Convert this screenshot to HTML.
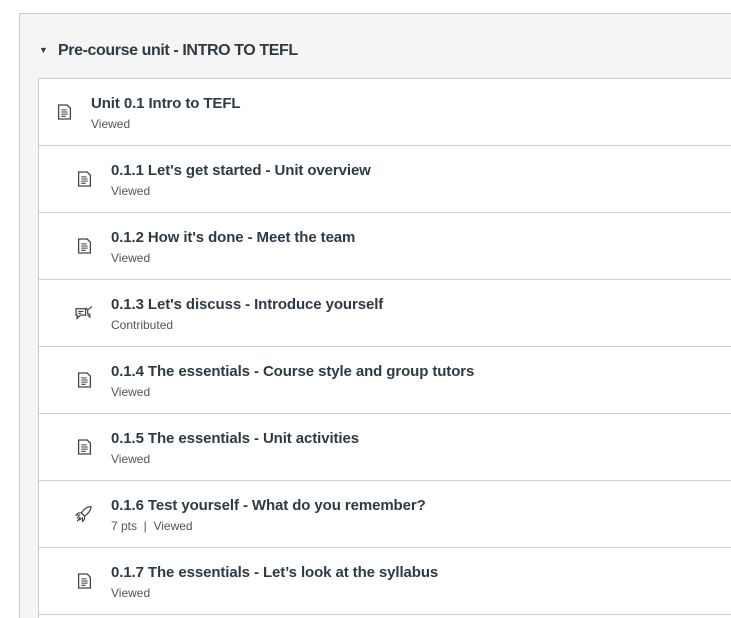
<!DOCTYPE html>
<html><head><style>
html,body{margin:0;background:#fff;font-family:"Liberation Sans",sans-serif;width:731px;height:618px;overflow:hidden;position:relative}
.outer{position:absolute;left:19px;top:13px;width:711px;height:604px;background:#f5f5f5;border-left:1px solid #c7cdd1;border-top:1px solid #c7cdd1}
.hdr{position:absolute;left:39px;top:42px;font-size:16px;font-weight:bold;color:#2d3b45;letter-spacing:-0.4px}
.hdr .tri{font-size:9px;display:inline-block;width:19px;vertical-align:2px}
.list{position:absolute;left:38px;top:78px;width:693px;height:540px;overflow:hidden;background:#fff;border-left:1px solid #c7cdd1;border-top:1px solid #c7cdd1}
.row{position:relative;height:66px;border-bottom:1px solid #c7cdd1}
.ic{position:absolute;top:24px;width:15px;height:18px}
.t{position:absolute;top:16px;font-size:15px;font-weight:bold;color:#2d3b45;letter-spacing:-0.1px;white-space:nowrap}
.s{position:absolute;top:38px;font-size:12px;color:#555}
</style></head><body>
<div class="outer"></div>
<div class="hdr"><span class="tri">▼</span>Pre-course unit - INTRO TO TEFL</div>
<div class="list">
<div class="row"><svg class="ic" style="left:18px" viewBox="0 0 14 16"><path d="M1.5 1.5h8l3 3v10h-11z" fill="none" stroke="#444" stroke-width="1.2"/><path d="M4 6h5M4 8h6M4 10h6M4 12h4" stroke="#444" stroke-width="1"/></svg><div class="t" style="left:52px">Unit 0.1 Intro to TEFL</div><div class="s" style="left:52px">Viewed</div></div>
<div class="row"><svg class="ic" style="left:38px" viewBox="0 0 14 16"><path d="M1.5 1.5h8l3 3v10h-11z" fill="none" stroke="#444" stroke-width="1.2"/><path d="M4 6h5M4 8h6M4 10h6M4 12h4" stroke="#444" stroke-width="1"/></svg><div class="t" style="left:72px">0.1.1 Let's get started - Unit overview</div><div class="s" style="left:72px">Viewed</div></div>
<div class="row"><svg class="ic" style="left:38px" viewBox="0 0 14 16"><path d="M1.5 1.5h8l3 3v10h-11z" fill="none" stroke="#444" stroke-width="1.2"/><path d="M4 6h5M4 8h6M4 10h6M4 12h4" stroke="#444" stroke-width="1"/></svg><div class="t" style="left:72px">0.1.2 How it's done - Meet the team</div><div class="s" style="left:72px">Viewed</div></div>
<div class="row"><svg class="ic" style="left:36px;width:18px" viewBox="0 0 17 16"><path d="M1 4h9v6H5l-3 3v-3H1z" fill="none" stroke="#444" stroke-width="1.2"/><path d="M10 3l2 2 4-3M12 5v4h2v3l-2-2" fill="none" stroke="#444" stroke-width="1.1"/><path d="M3 6.5h5M3 8.3h3" stroke="#444"/></svg><div class="t" style="left:72px">0.1.3 Let's discuss - Introduce yourself</div><div class="s" style="left:72px">Contributed</div></div>
<div class="row"><svg class="ic" style="left:38px" viewBox="0 0 14 16"><path d="M1.5 1.5h8l3 3v10h-11z" fill="none" stroke="#444" stroke-width="1.2"/><path d="M4 6h5M4 8h6M4 10h6M4 12h4" stroke="#444" stroke-width="1"/></svg><div class="t" style="left:72px">0.1.4 The essentials - Course style and group tutors</div><div class="s" style="left:72px">Viewed</div></div>
<div class="row"><svg class="ic" style="left:38px" viewBox="0 0 14 16"><path d="M1.5 1.5h8l3 3v10h-11z" fill="none" stroke="#444" stroke-width="1.2"/><path d="M4 6h5M4 8h6M4 10h6M4 12h4" stroke="#444" stroke-width="1"/></svg><div class="t" style="left:72px">0.1.5 The essentials - Unit activities</div><div class="s" style="left:72px">Viewed</div></div>
<div class="row"><svg class="ic" style="left:36px;width:18px" viewBox="0 0 17 16"><path d="M15 1c-4 0-7 3-9 6l3 3c3-2 6-5 6-9z" fill="none" stroke="#444" stroke-width="1.2"/><path d="M6 7H3L1 9h4M9 10v3l-2 2v-4M5 11l-3 4M4 10l-2 2M6 12l-2 2" fill="none" stroke="#444" stroke-width="1.1"/></svg><div class="t" style="left:72px">0.1.6 Test yourself - What do you remember?</div><div class="s" style="left:72px">7 pts &nbsp;|&nbsp; Viewed</div></div>
<div class="row"><svg class="ic" style="left:38px" viewBox="0 0 14 16"><path d="M1.5 1.5h8l3 3v10h-11z" fill="none" stroke="#444" stroke-width="1.2"/><path d="M4 6h5M4 8h6M4 10h6M4 12h4" stroke="#444" stroke-width="1"/></svg><div class="t" style="left:72px">0.1.7 The essentials - Let’s look at the syllabus</div><div class="s" style="left:72px">Viewed</div></div>
</div>
</body></html>
